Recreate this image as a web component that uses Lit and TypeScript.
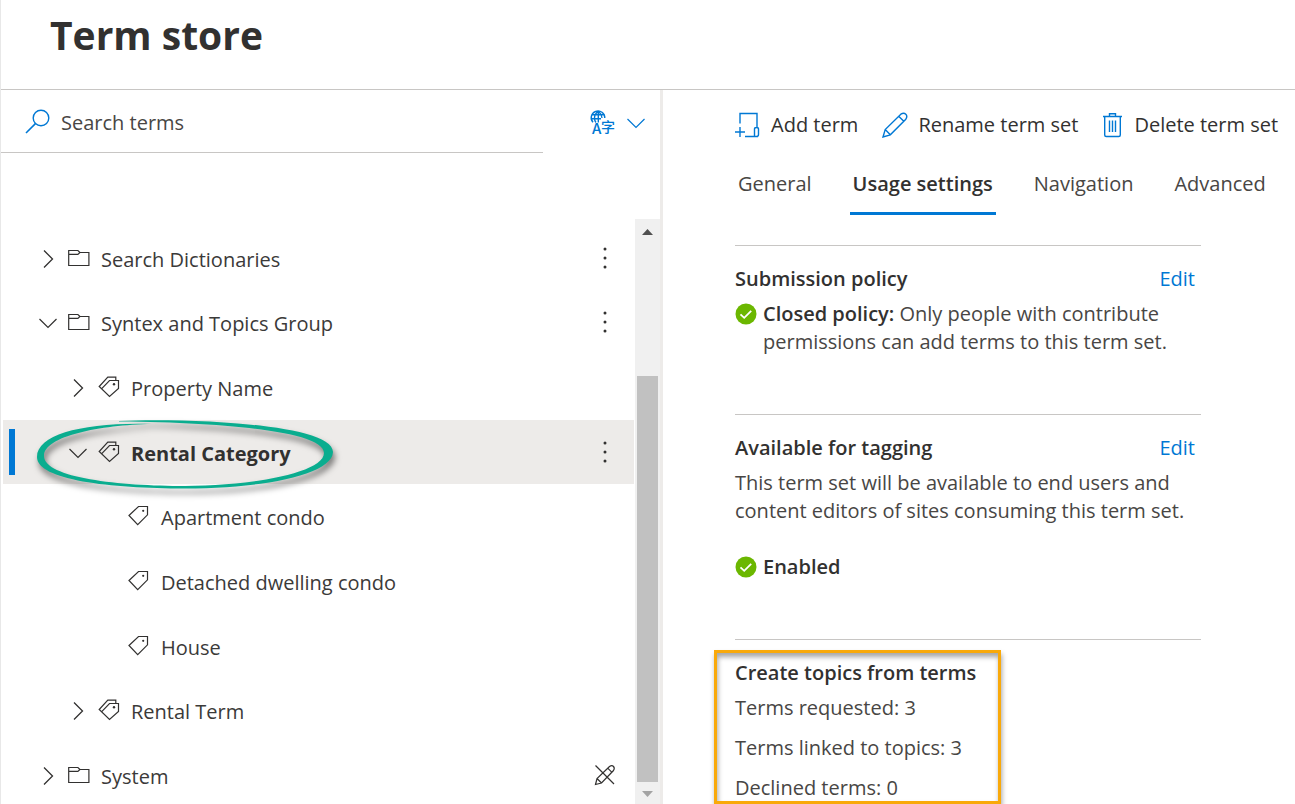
import { LitElement, html, css, svg, nothing } from "lit";
import { customElement, property, state } from "lit/decorators.js";
import { classMap } from "lit/directives/class-map.js";

interface Node {
  label: string;
  level: number;
  icon: "folder" | "tags" | "tag";
  open?: boolean;
  action?: "more" | "readonly";
  selected?: boolean;
}

const nodes: Node[] = [
  { label: "Search Dictionaries", level: 0, icon: "folder", open: false, action: "more" },
  { label: "Syntex and Topics Group", level: 0, icon: "folder", open: true, action: "more" },
  { label: "Property Name", level: 1, icon: "tags", open: false },
  { label: "Rental Category", level: 1, icon: "tags", open: true, action: "more", selected: true },
  { label: "Apartment condo", level: 2, icon: "tag" },
  { label: "Detached dwelling condo", level: 2, icon: "tag" },
  { label: "House", level: 2, icon: "tag" },
  { label: "Rental Term", level: 1, icon: "tags", open: false },
  { label: "System", level: 0, icon: "folder", open: false, action: "readonly" },
];

const frame = (w: number, h: number, body: unknown) => html`<svg
  width=${w} height=${h} viewBox="0 0 ${w} ${h}" fill="none" stroke="currentColor" aria-hidden="true">${body}</svg>`;

const icons = {
  search: frame(26, 26, svg`<circle cx="16" cy="9" r="7.8" stroke-width="1.4"/><path d="M10.4 14.6 1 24" stroke-width="1.6"/>`),
  right: frame(24, 24, svg`<path d="m8 3.5 8.5 8.5L8 20.5" stroke-width="1.3"/>`),
  down: frame(24, 24, svg`<path d="m3.5 8 8.5 8.5L20.5 8" stroke-width="1.2"/>`),
  folder: frame(22, 22, svg`<path d="M.7 18.5V3.5h9.2l2 2h9v13zM.7 7.4h9.2l2-1.9" stroke-width="1.2"/>`),
  tags: frame(22, 22, svg`<path d="M3.5 12.8 11.5 4.5h9v8l-9 8L1.2 10.5l8.6-9.300h8v3.300" stroke-width="1.2"/><circle cx="16" cy="8.300" r="1.200" fill="currentColor" stroke="none"/>`),
  tag: frame(22, 22, svg`<path d="M1 10.5 10.5 1.5h9v8.300l-9.800 9.800z" stroke-width="1.2"/><circle cx="15.200" cy="5.800" r="1.100" fill="currentColor" stroke="none"/>`),
  more: frame(24, 24, svg`<g fill="currentColor" stroke="none"><circle cx="12" cy="3" r="1.5"/><circle cx="12" cy="12" r="1.5"/><circle cx="12" cy="21" r="1.5"/></g>`),
  readonly: frame(24, 24, svg`<path d="M2.500 21.5 4 15.5 16.500 3.500q2.500-1.800 4 0t0 4L8.500 20zM4 15.500 8.500 20M14.700 5.200l4 4M2.500 2.500l18.500 18.500" stroke-width="1.2"/>`),
  add: frame(26, 26, svg`<path d="M5 11.500V1.500h17V15M10 24.500h13M5 15v10M0 20h10M19.500 24.500V17q0-1.500 2-1.500t2 1.500v5.500q0 2-2 2" stroke-width="1.4"/>`),
  edit: frame(26, 26, svg`<path d="M1 25 3.200 17.500 18.800 2.200q3-2 5 0t0 5L8.300 22.800zM3.200 17.500l5.100 5.300M16.700 4.200l5.100 5.100" stroke-width="1.4"/>`),
  bin: frame(22, 26, svg`<path d="M1 4.500h19M7.500 4V1.700h6V4M2.700 5v18q0 1.500 1.500 1.500h12.600q1.500 0 1.500-1.500V5M7.500 8.500V20M10.500 8.500V20M13.500 8.500V20" stroke-width="1.4"/>`),
  check: html`<svg width="22" height="22" viewBox="0 0 22 22" role="img" aria-label="Active"><circle cx="11" cy="11" r="10.500" fill="#6bb700"/><path d="m5.500 11.300 3.700 3.500 7-7" fill="none" stroke="#fff" stroke-width="1.8"/></svg>`,
  language: html`<svg class="language" width="26" height="26" viewBox="0 0 26 26" aria-hidden="true">
    <g fill="none" stroke="currentColor" stroke-width="1.4"><path d="M3 12.300A6.800 6.800 0 1 1 14.800 8M8 1.200q-3.500 3-3.500 6.500t1.500 4.800M8.500 1.200q3.300 3 3.500 6.800M8.300 1v11.500M1.800 4.800h13M1.500 8.800h9.500"/></g>
    <g fill="currentColor" font-weight="500"><text x="2" y="24" font-size="15">A</text><text x="11" y="22" font-size="14">字</text></g></svg>`,
};

@customElement("term-row")
export class TermRow extends LitElement {
  @property({ attribute: false }) node!: Node;

  static styles = css`
    :host { display: block; min-height: 0; }
    .row { position: relative; box-sizing: border-box; height: 100%; display: flex; align-items: center; padding: 0 17px 0 33px; color: #323130; }
    .selected { background: #edebe9; }
    .bar { position: absolute; left: 6px; top: 9px; bottom: 9px; width: 6px; background: #0078d4; }
    .indent { flex: none; }
    button { flex: none; width: 24px; height: 28px; padding: 0; border: 0; background: none; color: inherit; display: grid; place-items: center; cursor: pointer; }
    .spacer { flex: none; width: 24px; }
    .icon { flex: none; display: grid; margin: 0 11px 0 8px; }
    .label { flex: 1; font-size: 20px; line-height: 28px; white-space: nowrap; padding-top: 4px; color: #3b3a39; }
    .selected .label { font-weight: 700; color: #323130; }
    .toggle { padding-top: 2px; }
    .ring { position: absolute; left: 27px; top: -5px; overflow: visible; pointer-events: none; filter: drop-shadow(2px 5px 3px rgba(0, 0, 0, 0.5)); }
  `;

  render() {
    const n = this.node;
    return html`<div class=${classMap({ row: true, selected: !!n.selected })} role="treeitem" aria-selected=${!!n.selected} aria-level=${n.level + 1}>
      ${n.selected ? html`<span class="bar"></span>` : nothing}
      <span class="indent" style="width:${n.level * 30}px"></span>
      ${n.open === undefined
        ? html`<span class="spacer"></span>`
        : html`<button class="toggle" aria-label=${n.open ? "Collapse" : "Expand"}>${n.open ? icons.down : icons.right}</button>`}
      <span class="icon">${icons[n.icon]}</span>
      <span class="label">${n.label}</span>
      ${n.action ? html`<button aria-label=${n.action === "more" ? "More actions" : "Read only"}>${icons[n.action]}</button>` : nothing}
      ${n.selected
        ? html`<svg class="ring" width="310" height="80" viewBox="30 415 310 80" aria-hidden="true">
            <path fill="#0aad8f" d="M119 421C190 418 333 424 333 452C332 475 262 488.500 185 488.500C110 488.500 37 480 37 457C37 434 85 422 152 424C100 425 44 436 44 456C44 478 120 486 185 486C250 486 324 473 324 453C324 432 230 422.500 119 421.500Z"/></svg>`
        : nothing}
    </div>`;
  }
}

@customElement("app-root")
export class AppRoot extends LitElement {
  @state() private tab = "Usage settings";

  static styles = css`
    :host { display: flex; flex-direction: column; box-sizing: border-box; height: 100vh; overflow: hidden; border-left: 1px solid #e8e8e8; background: #fff; color: #323130; font-family: "Open Sans", "Noto Sans CJK SC", sans-serif; font-size: 20px; line-height: 28px; }
    header { flex: none; padding: 7px 49px 26px; border-bottom: 1px solid #c8c6c4; }
    h1 { margin: 0; font-size: 39px; line-height: 56px; font-weight: 700; }
    h2 { margin: 0; font-size: 20px; line-height: 28px; font-weight: 600; }
    p { margin: 0; color: #484644; }
    b { font-weight: 600; color: #323130; }
    button, input { font: inherit; color: inherit; background: none; border: 0; padding: 0; margin: 0; }
    button { cursor: pointer; }
    .body { flex: 1; min-height: 0; display: grid; grid-template-columns: minmax(0, 662fr) minmax(0, 632fr); }
    .side { min-height: 0; display: flex; flex-direction: column; border-right: 3px solid #edebe9; }
    .top { flex: none; display: flex; align-items: flex-start; justify-content: space-between; padding: 0 12px 63px 0; }
    .search { flex: 0 1 542px; box-sizing: border-box; height: 63px; display: flex; align-items: center; gap: 10px; padding: 2px 0 0 24px; border-bottom: 1px solid #c8c6c4; color: #0078d4; }
    .search svg { flex: none; }
    .search input { flex: 1; min-width: 0; padding-top: 2px; color: #484644; outline: 0; }
    .search input::placeholder { color: #484644; opacity: 1; }
    .lang { display: flex; align-items: center; gap: 8px; height: 66px; color: #0078d4; }
    .language { overflow: visible; font-family: "Noto Sans CJK SC", sans-serif; }
    .scroller { flex: 1; min-height: 0; display: flex; }
    .tree { flex: 1; min-width: 0; display: grid; grid-auto-rows: minmax(0, 1fr); gap: 1px; margin: 7px 1px -3px 2px; }
    .scrollbar { flex: none; width: 25px; display: flex; flex-direction: column; align-items: center; background: #f0f0f0; }
    .scrollbar svg { flex: none; display: block; }
    .track { flex: 1; align-self: stretch; display: flex; flex-direction: column; justify-content: flex-end; padding: 0 2px; }
    .thumb { height: 75%; background: #c1c1c1; }
    .main { min-width: 0; padding: 21px 0 0 72px; }
    .tools { display: flex; gap: 24px; white-space: nowrap; }
    .tools button { display: flex; align-items: center; gap: 10px; }
    .tools svg { flex: none; color: #0078d4; }
    .tabs { display: flex; gap: 35px; margin-top: 26px; white-space: nowrap; color: #484644; }
    .tabs button { padding: 5px 3px 14px; border-bottom: 3px solid transparent; }
    .tabs .on { font-weight: 600; color: #323130; border-color: #0078d4; }
    section { margin-right: 94px; border-top: 1px solid #c8c6c4; }
    .policy { margin-top: 30px; padding: 19px 0 58px; }
    .tagging { padding: 19px 0 58px; }
    .topics { padding-top: 10px; }
    .head { display: flex; justify-content: space-between; padding-right: 6px; margin-bottom: 7px; }
    a { color: #0078d4; text-decoration: none; }
    .status { display: flex; align-items: flex-start; gap: 6px; }
    .status svg { flex: none; margin-top: 3px; }
    .enabled { margin-top: 28px; }
    .callout { box-sizing: border-box; width: 287px; margin-left: -21px; height: 154px; padding: 6px 0 0 18px; border: 3px solid #f9a90a; box-shadow: 1px 4px 5px rgba(0, 0, 0, 0.35), inset 1px 4px 5px rgba(0, 0, 0, 0.35); white-space: nowrap; }
    .callout h2 { margin-bottom: 7px; }
    .callout p + p { margin-top: 12px; }
  `;

  render() {
    return html`
      <header><h1>Term store</h1></header>
      <div class="body">
        <div class="side">
          <div class="top">
            <label class="search">${icons.search}<input type="text" placeholder="Search terms" aria-label="Search terms" /></label>
            <button class="lang" aria-label="Language">${icons.language}${icons.down}</button>
          </div>
          <div class="scroller">
            <div class="tree" role="tree">${nodes.map((n) => html`<term-row .node=${n}></term-row>`)}</div>
            <div class="scrollbar">
              <svg width="25" height="22" viewBox="0 0 25 22"><path d="m12.500 10 5.500 6H7z" fill="#505050"/></svg>
              <div class="track"><div class="thumb"></div></div>
              <svg width="25" height="22" viewBox="0 0 25 22"><path d="m12.500 15 5.500-6H7z" fill="#a3a3a3"/></svg>
            </div>
          </div>
        </div>
        <main class="main">
          <div class="tools">
            <button>${icons.add}Add term</button>
            <button>${icons.edit}Rename term set</button>
            <button>${icons.bin}Delete term set</button>
          </div>
          <div class="tabs" role="tablist">
            ${["General", "Usage settings", "Navigation", "Advanced"].map(
              (t) => html`<button role="tab" aria-selected=${this.tab === t} class=${classMap({ on: this.tab === t })} @click=${() => (this.tab = t)}>${t}</button>`
            )}
          </div>
          <section class="policy">
            <div class="head"><h2>Submission policy</h2><a href="#policy">Edit</a></div>
            <div class="status">${icons.check}<p><b>Closed policy:</b> Only people with contribute permissions can add terms to this term set.</p></div>
          </section>
          <section class="tagging">
            <div class="head"><h2>Available for tagging</h2><a href="#tagging">Edit</a></div>
            <p>This term set will be available to end users and content editors of sites consuming this term set.</p>
            <div class="status enabled">${icons.check}<b>Enabled</b></div>
          </section>
          <section class="topics">
            <div class="callout">
              <h2>Create topics from terms</h2>
              <p>Terms requested: 3</p>
              <p>Terms linked to topics: 3</p>
              <p>Declined terms: 0</p>
            </div>
          </section>
        </main>
      </div>
    `;
  }
}
